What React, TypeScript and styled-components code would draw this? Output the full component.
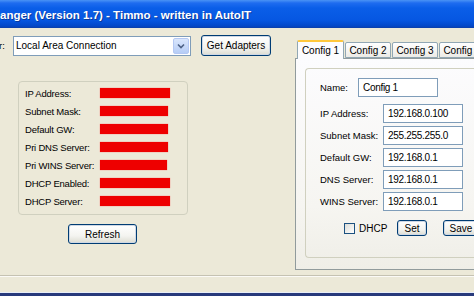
import React, { useState } from 'react';
import styled, { createGlobalStyle } from 'styled-components';

const GlobalStyle = createGlobalStyle`
  html, body {
    margin: 0;
    padding: 0;
    width: 474px;
    height: 296px;
    overflow: hidden;
    background: #ece9d8;
  }
  * { box-sizing: border-box; }
`;

const Window = styled.div`
  width: 474px;
  height: 296px;
  display: flex;
  flex-direction: column;
  font-family: 'Liberation Sans', Arial, sans-serif;
  font-size: 9.5px;
  color: #000;
  background: #ece9d8;
  overflow: hidden;
`;

const TitleBar = styled.div`
  height: 28px;
  flex: none;
  display: flex;
  align-items: center;
  padding-top: 1px;
  background: linear-gradient(
    to bottom,
    #4a93f5 0px,
    #1e6cf0 3px,
    #0a5ee8 8px,
    #0657e2 20px,
    #0348c8 26px,
    #0c3fa8 28px
  );
  color: #fff;
  font-weight: bold;
  font-size: 11.5px;
  white-space: nowrap;
  text-shadow: 1px 1px 0 #0b3b9c;
`;

const Body = styled.div`
  flex: 1;
  display: flex;
  min-height: 0;
`;

const LeftColumn = styled.div`
  width: 295px;
  flex: none;
  display: flex;
  flex-direction: column;
`;

const AdapterRow = styled.div`
  display: flex;
  align-items: center;
  margin-top: 7px;
  height: 21px;
`;

const CutLabel = styled.span`
  width: 14px;
  flex: none;
  margin-left: -1px;
`;

const Combo = styled.div`
  width: 178px;
  height: 20px;
  display: flex;
  align-items: center;
  justify-content: space-between;
  background: #fff;
  border: 1px solid #7f9db9;
  padding-left: 2px;
  font-size: 10px;
`;

const ComboArrow = styled.div`
  width: 16px;
  height: 16px;
  margin-right: 1px;
  border-radius: 2px;
  background: linear-gradient(to bottom, #d9e6fc, #b6cdf6);
  border: 1px solid #b4c8f3;
  display: flex;
  align-items: center;
  justify-content: center;
`;

const Button = styled.button<{ w: number; h?: number }>`
  width: ${({ w }) => w}px;
  height: ${({ h }) => h ?? 20}px;
  flex: none;
  padding: 0;
  font-family: inherit;
  font-size: 10px;
  color: #000;
  border: 1px solid #003c74;
  border-radius: 3px;
  background: linear-gradient(to bottom, #ffffff 0%, #f4f4f0 60%, #dcdcd2 100%);
  box-shadow: inset 0 0 0 1px #cfd8e4;
`;

const GroupBox = styled.div`
  margin: 25px 0 0 18px;
  width: 170px;
  height: 134px;
  border: 1px solid #d0d0bf;
  border-radius: 4px;
  padding: 6px 0 0 6px;
  display: flex;
  flex-direction: column;
  gap: 8px;
`;

const StatusRow = styled.div`
  display: flex;
  align-items: center;
  height: 10px;
`;

const StatusLabel = styled.span`
  width: 75px;
  flex: none;
  white-space: nowrap;
  letter-spacing: -0.2px;
`;

const StatusBar = styled.div<{ w: number }>`
  width: ${({ w }) => w}px;
  height: 10px;
  background: #ee0000;
  box-shadow: 0 0 1px #ff6060;
`;

const RefreshWrap = styled.div`
  margin: 9px 0 0 68px;
`;

const RightColumn = styled.div`
  flex: 1;
  display: flex;
  flex-direction: column;
  padding-top: 12px;
`;

const TabStrip = styled.div`
  display: flex;
  align-items: flex-end;
  height: 18px;
  padding-left: 2px;
  gap: 1px;
`;

const Tab = styled.div<{ active?: boolean }>`
  width: ${({ active }) => (active ? 47 : 46)}px;
  height: ${({ active }) => (active ? 19 : 16)}px;
  flex: none;
  display: flex;
  align-items: center;
  justify-content: center;
  white-space: nowrap;
  font-size: 10px;
  border: 1px solid #91a7b4;
  border-bottom: ${({ active }) => (active ? 'none' : '1px solid #91a7b4')};
  border-radius: 2px 2px 0 0;
  background: ${({ active }) =>
    active ? '#fcfcfe' : 'linear-gradient(to bottom, #ffffff, #ecebe6)'};
  border-top: ${({ active }) => (active ? '2px solid #ffc83c' : '1px solid #91a7b4')};
  position: relative;
  z-index: ${({ active }) => (active ? 1 : 0)};
  margin-bottom: ${({ active }) => (active ? -1 : 0)}px;
`;

const TabPanel = styled.div`
  margin-left: 0;
  height: 212px;
  border: 1px solid #919b9c;
  border-right: none;
  background: linear-gradient(to bottom, #fcfcfe 0%, #f6f5f1 70%, #efeee7 100%);
  padding: 9px 0 0 9px;
`;

const ConfigGroup = styled.div`
  height: 190px;
  border: 1px solid #d0d0bf;
  border-right: none;
  border-radius: 4px 0 0 4px;
  padding: 9px 0 0 14px;
  display: flex;
  flex-direction: column;
`;

const FieldRow = styled.div<{ labelW: number }>`
  display: grid;
  grid-template-columns: ${({ labelW }) => labelW}px 80px;
  align-items: center;
  height: 19px;
  margin-bottom: 3px;
  white-space: nowrap;
`;

const Input = styled.div`
  height: 19px;
  border: 1px solid #7f9db9;
  background: #fff;
  padding-left: 4px;
  display: flex;
  align-items: center;
  font-size: 10px;
  letter-spacing: -0.3px;
`;

const NameRow = styled(FieldRow)`
  margin-bottom: 7px;
`;

const ActionRow = styled.div`
  display: flex;
  align-items: center;
  margin-top: 6px;
  margin-left: 24px;
`;

const CheckBox = styled.div<{ checked: boolean }>`
  width: 11px;
  height: 11px;
  border: 1px solid #1c5180;
  background: linear-gradient(135deg, #dcdcd7, #ffffff);
  margin-right: 4px;
  display: flex;
  align-items: center;
  justify-content: center;
  font-size: 9px;
`;

const CheckLabel = styled.span`
  width: 38px;
  font-size: 10px;
`;

const Footer = styled.div`
  height: 21px;
  flex: none;
  display: flex;
  flex-direction: column;
`;

const Separator = styled.div`
  height: 2px;
  border-top: 1px solid #c5c2b2;
  border-bottom: 1px solid #fbfaf6;
`;

const FooterSpace = styled.div`
  flex: 1;
  background: #ece9d8;
`;

const Taskbar = styled.div`
  height: 4px;
  border-top: 1px solid #e8eef8;
  background: #283a7c;
`;

const statusRows = [
  { label: 'IP Address:', w: 70 },
  { label: 'Subnet Mask:', w: 68 },
  { label: 'Default GW:', w: 68 },
  { label: 'Pri DNS Server:', w: 68 },
  { label: 'Pri WINS Server:', w: 67 },
  { label: 'DHCP Enabled:', w: 70 },
  { label: 'DHCP Server:', w: 70 },
];

const configFields = [
  { label: 'IP Address:', value: '192.168.0.100' },
  { label: 'Subnet Mask:', value: '255.255.255.0' },
  { label: 'Default GW:', value: '192.168.0.1' },
  { label: 'DNS Server:', value: '192.168.0.1' },
  { label: 'WINS Server:', value: '192.168.0.1' },
];

const tabs = ['Config 1', 'Config 2', 'Config 3', 'Config 4'];

const App: React.FC = () => {
  const [currentTab, setCurrentTab] = useState(0);
  const [dhcp, setDhcp] = useState(false);

  return (
    <>
      <GlobalStyle />
      <Window>
        <TitleBar>anger (Version 1.7) - Timmo - written in AutoIT</TitleBar>
        <Body>
          <LeftColumn>
            <AdapterRow>
              <CutLabel>r:</CutLabel>
              <Combo>
                <span>Local Area Connection</span>
                <ComboArrow>
                  <svg width="8" height="6" viewBox="0 0 8 6">
                    <path d="M1 1.5 L4 4.5 L7 1.5" stroke="#4d6185" strokeWidth="1.6" fill="none" />
                  </svg>
                </ComboArrow>
              </Combo>
              <div style={{ width: 10 }} />
              <Button w={70} h={21}>Get Adapters</Button>
            </AdapterRow>
            <GroupBox>
              {statusRows.map((row) => (
                <StatusRow key={row.label}>
                  <StatusLabel>{row.label}</StatusLabel>
                  <StatusBar w={row.w} />
                </StatusRow>
              ))}
            </GroupBox>
            <RefreshWrap>
              <Button w={69}>Refresh</Button>
            </RefreshWrap>
          </LeftColumn>
          <RightColumn>
            <TabStrip>
              {tabs.map((tab, index) => (
                <Tab key={tab} active={index === currentTab} onClick={() => setCurrentTab(index)}>
                  {tab}
                </Tab>
              ))}
            </TabStrip>
            <TabPanel>
              <ConfigGroup>
                <NameRow labelW={38}>
                  <span>Name:</span>
                  <Input>{tabs[currentTab]}</Input>
                </NameRow>
                {configFields.map((field) => (
                  <FieldRow key={field.label} labelW={63}>
                    <span>{field.label}</span>
                    <Input>{field.value}</Input>
                  </FieldRow>
                ))}
                <ActionRow>
                  <CheckBox checked={dhcp} onClick={() => setDhcp(!dhcp)}>
                    {dhcp ? '✓' : ''}
                  </CheckBox>
                  <CheckLabel>DHCP</CheckLabel>
                  <Button w={30} h={16}>Set</Button>
                  <div style={{ width: 16 }} />
                  <Button w={36} h={16}>Save</Button>
                </ActionRow>
              </ConfigGroup>
            </TabPanel>
          </RightColumn>
        </Body>
        <Footer>
          <Separator />
          <FooterSpace />
          <Taskbar />
        </Footer>
      </Window>
    </>
  );
};

export default App;
